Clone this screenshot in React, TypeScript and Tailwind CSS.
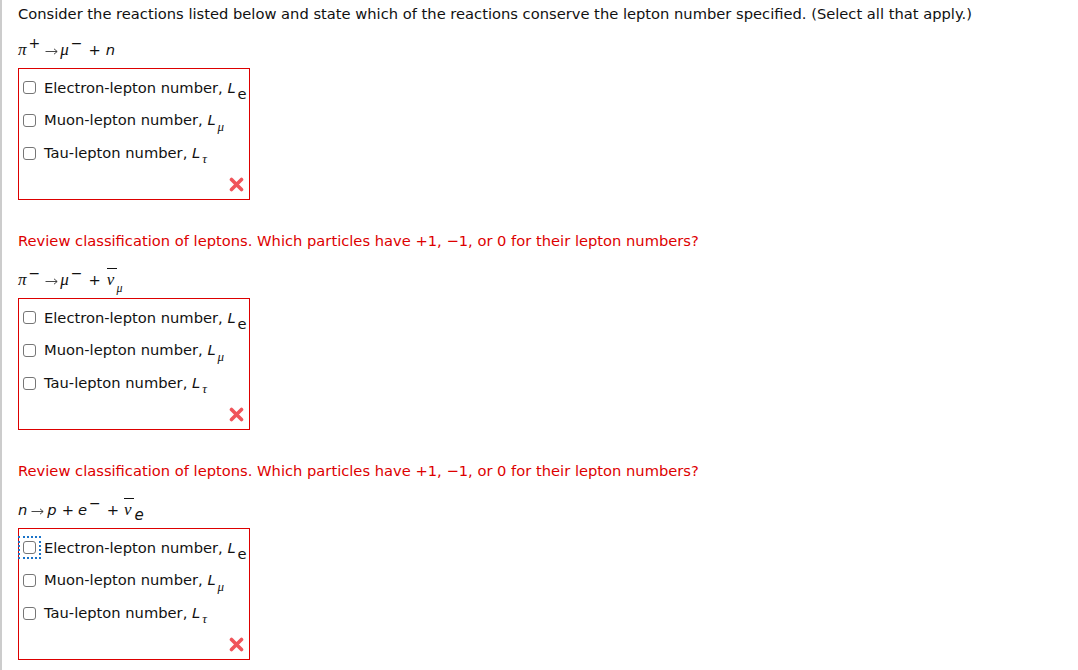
import type { ReactNode } from 'react';

const SERIF = "font-['Liberation_Serif',serif]";

function Cross() {
  return (
    <svg width="15" height="15" viewBox="0 0 15 15" className="block">
      <path d="M2.5 2.5 L12.5 12.5 M12.5 2.5 L2.5 12.5" stroke="#f0545a" strokeWidth="3.6" strokeLinecap="round" />
    </svg>
  );
}

function Arrow({ className = '' }: { className?: string }) {
  return (
    <svg width="13" height="9" viewBox="0 0 13 9" className={`relative top-[1px] shrink-0 ${className}`}>
      <path d="M0.5 4.5 H12 M9 1.8 L12.2 4.5 L9 7.2" fill="none" stroke="#333" strokeWidth="0.9" />
    </svg>
  );
}

function Option({ label, sub, focused }: { label: string; sub: ReactNode; focused?: boolean }) {
  return (
    <div className="flex h-[33px] items-center">
      <span
        className={`ml-[4px] flex h-[13px] w-[13px] items-center justify-center ${
          focused ? 'outline-2 outline-dotted outline-[#1a73c8] outline-offset-[3px]' : ''
        }`}
      >
        <span className="block h-[13px] w-[13px] rounded-[3px] border border-[#767676] bg-white" />
      </span>
      <span className="ml-[8px] whitespace-nowrap">
        {label} <i>L</i>
        {sub}
      </span>
    </div>
  );
}

function AnswerBox({ focused }: { focused?: boolean }) {
  return (
    <div className="mt-[9px] w-[232px] border border-[#dd0000] pt-[2px]">
      <Option
        label="Electron-lepton number,"
        sub={<span className="relative top-[6px] ml-[2px]">e</span>}
        focused={focused}
      />
      <Option
        label="Muon-lepton number,"
        sub={<i className={`${SERIF} relative top-[6px] ml-[2px] text-[13px]`}>μ</i>}
      />
      <Option
        label="Tau-lepton number,"
        sub={<i className={`${SERIF} relative top-[5px] ml-[2px] text-[13px]`}>τ</i>}
      />
      <div className="flex h-[29px] items-center justify-end pr-[5px]">
        <Cross />
      </div>
    </div>
  );
}

function Feedback() {
  return (
    <p className="mt-[32px] text-[#dd0000]">
      Review classification of leptons. Which particles have +1, −1, or 0 for their lepton numbers?
    </p>
  );
}

function Sup({ children }: { children: ReactNode }) {
  return <span className="relative -top-[7px] ml-[2px] text-[14px]">{children}</span>;
}

export default function App() {
  return (
    <div className="min-h-screen border-l-2 border-[#cccccc] bg-white pl-4 pt-[5px] font-['DejaVu_Sans',Verdana,sans-serif] text-[14.7px] leading-[18px] text-[#111]">
      <p>
        Consider the reactions listed below and state which of the reactions conserve the lepton number specified. (Select
        all that apply.)
      </p>

      {/* reaction 1 */}
      <div className="mt-[18px] flex h-[18px] items-center whitespace-pre">
        <i className={`${SERIF} text-[17px]`}>π</i>
        <Sup>+</Sup>
        <Arrow className="ml-[5px] mr-[2px]" />
        <i className={`${SERIF} text-[17px]`}>μ</i>
        <Sup>−</Sup>
        <span className="ml-[6px]">+</span>
        <i className="ml-[5px]">n</i>
      </div>
      <AnswerBox />

      <Feedback />

      {/* reaction 2 */}
      <div className="mt-[21px] flex h-[18px] items-center whitespace-pre">
        <i className={`${SERIF} text-[17px]`}>π</i>
        <Sup>−</Sup>
        <Arrow className="ml-[5px] mr-[2px]" />
        <i className={`${SERIF} text-[17px]`}>μ</i>
        <Sup>−</Sup>
        <span className="ml-[6px]">+</span>
        <span className="relative ml-[6px]">
          <span className="absolute -top-[3px] left-0 h-[1px] w-[10px] bg-[#111]" />
          <i className={`${SERIF} text-[17px]`}>ν</i>
        </span>
        <i className={`${SERIF} relative top-[8px] ml-[2px] text-[12px]`}>μ</i>
      </div>
      <AnswerBox />

      <Feedback />

      {/* reaction 3 */}
      <div className="mt-[21px] flex h-[18px] items-center whitespace-pre">
        <i>n</i>
        <Arrow className="ml-[4px] mr-[3px]" />
        <i>p</i>
        <span className="ml-[5px]">+</span>
        <i className="ml-[4px]">e</i>
        <Sup>−</Sup>
        <span className="ml-[6px]">+</span>
        <span className="relative ml-[5px]">
          <span className="absolute -top-[3px] left-0 h-[1px] w-[10px] bg-[#111]" />
          <i className={`${SERIF} text-[17px]`}>ν</i>
        </span>
        <i className="relative top-[5px] ml-[3px] text-[15px]">e</i>
      </div>
      <AnswerBox focused />
    </div>
  );
}
